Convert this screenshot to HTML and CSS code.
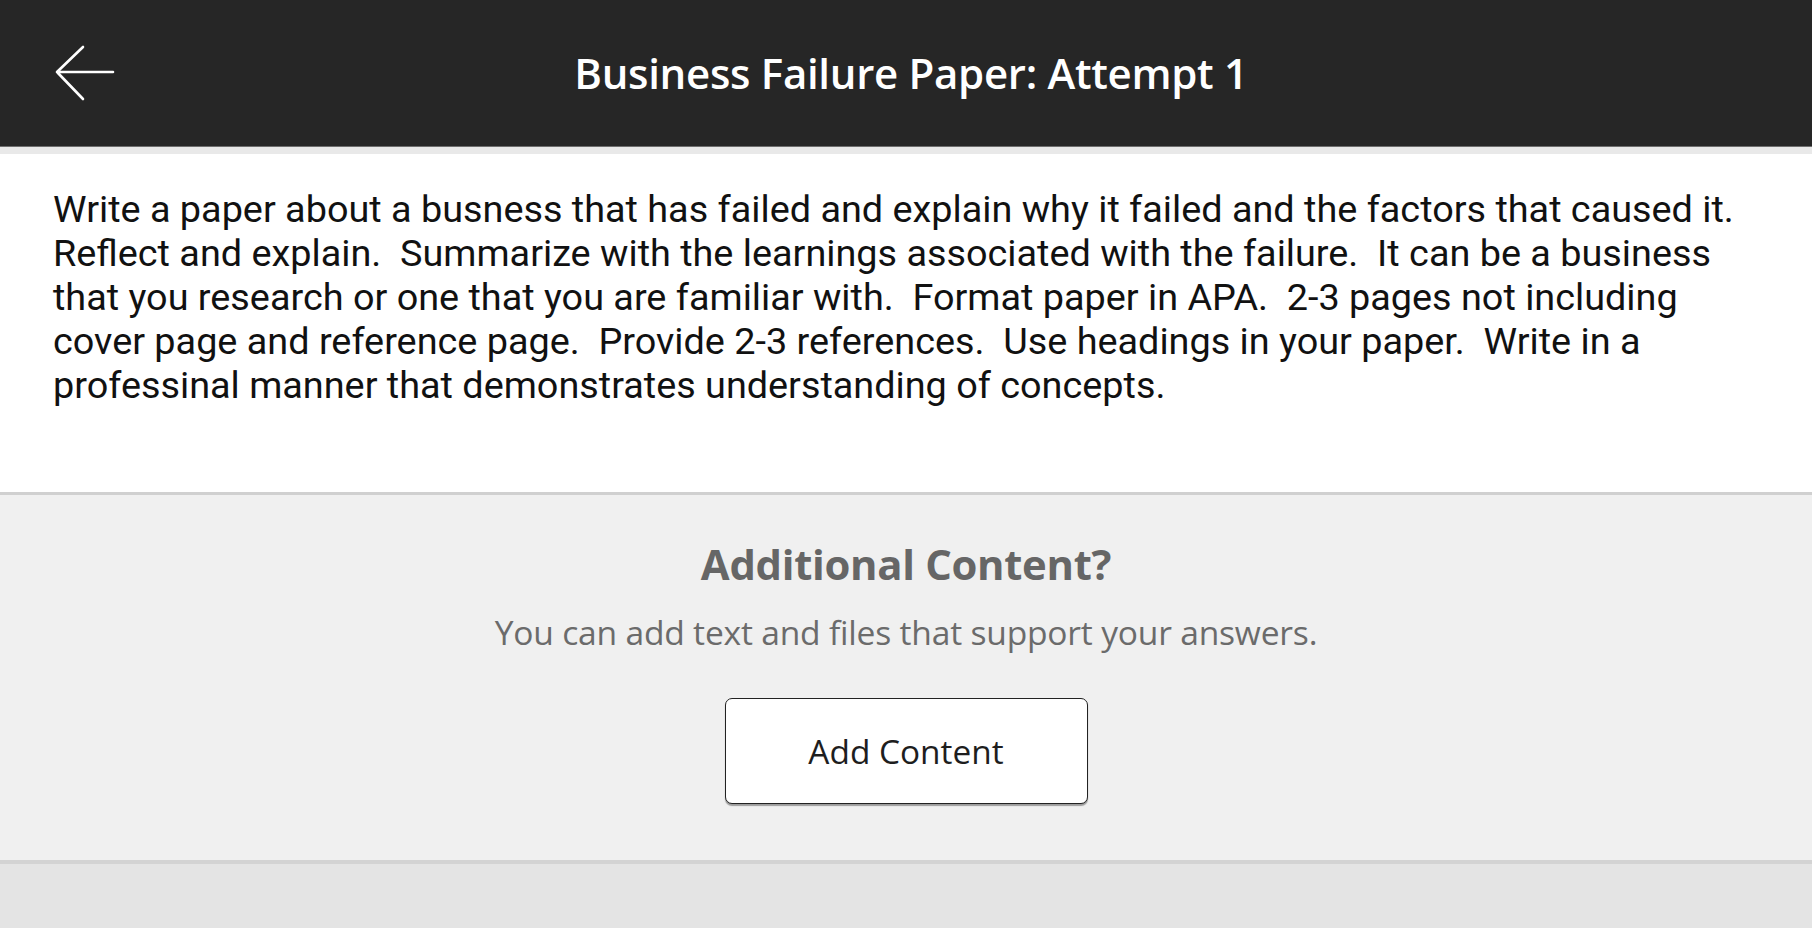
FILE: index.html
```html
<!DOCTYPE html>
<html lang="en">
<head>
<meta charset="utf-8">
<title>Business Failure Paper: Attempt 1</title>
<link rel="stylesheet" href="styles.css">
</head>
<body>
<header class="topbar">
  <div class="topbar-left">
    <svg class="back-icon" width="60" height="58" viewBox="0 0 60 58" aria-label="Back">
      <path d="M2 28 H58 M28 3 L2 28 L28 55" fill="none" stroke="#fff" stroke-width="2.6" stroke-linecap="round" stroke-linejoin="round"/>
    </svg>
  </div>
  <h1 class="title">Business Failure Paper: Attempt 1</h1>
  <div class="topbar-right"></div>
</header>
<div class="strip"></div>
<main>
  <section class="question">
    <p class="question-text">Write a paper about a busness that has failed and explain why it failed and the factors that caused it.  Reflect and explain.&nbsp; Summarize with the learnings associated with the failure.&nbsp; It can be a business that you research or one that you are familiar with.&nbsp; Format paper in APA.&nbsp; 2-3 pages not including cover page and reference page.&nbsp; Provide 2-3 references.&nbsp; Use headings in your paper.&nbsp; Write in a professinal manner that demonstrates understanding of concepts.</p>
  </section>
  <section class="additional">
    <h2 class="additional-title">Additional Content?</h2>
    <p class="additional-sub">You can add text and files that support your answers.</p>
    <button class="add-btn" type="button">Add Content</button>
  </section>
  <div class="footer-area"></div>
</main>
</body>
</html>
```
FILE: styles.css
```css
html, body {
  margin: 0;
  padding: 0;
}
body {
  background: #e4e4e4;
  font-family: "Open Sans", "Liberation Sans", sans-serif;
  width: 1812px;
  height: 928px;
  overflow: hidden;
}
.topbar {
  background: #262626;
  height: 146px;
  border-bottom: 1px solid #6e6e6e;
  display: grid;
  grid-template-columns: 1fr auto 1fr;
  align-items: center;
}
.topbar-left {
  padding-left: 55px;
  display: flex;
  align-items: center;
}
.back-icon {
  display: block;
}
.title {
  margin: 0 0 0 10px;
  color: #ffffff;
  font-family: "Open Sans", sans-serif;
  font-weight: 600;
  font-size: 42px;
  line-height: 56px;
  letter-spacing: -0.3px;
  white-space: nowrap;
}
.strip {
  height: 7px;
  background: #e9e9e9;
}
.question {
  background: #ffffff;
  padding: 33px 55px 85px 53px;
}
.question-text {
  margin: 0;
  font-family: Roboto, "Liberation Sans", sans-serif;
  font-size: 37.8px;
  line-height: 44px;
  color: #111111;
  white-space: pre-wrap;
}
.additional {
  background: #f0f0f0;
  border-top: 3px solid #d0d0d0;
  border-bottom: 4px solid #d3d3d3;
  display: flex;
  flex-direction: column;
  align-items: center;
  padding: 44px 0 56px 0;
}
.additional-title {
  margin: 0;
  font-family: "Open Sans", sans-serif;
  font-weight: 700;
  font-size: 41.8px;
  line-height: 50px;
  color: #666666;
  letter-spacing: -0.3px;
}
.additional-sub {
  margin: 20px 0 0 0;
  font-family: "Open Sans", sans-serif;
  font-size: 33.6px;
  line-height: 46px;
  color: #6b6b6b;
  letter-spacing: -0.2px;
}
.add-btn {
  margin-top: 43px;
  width: 363px;
  height: 106px;
  background: #ffffff;
  border: 1.5px solid #222222;
  border-radius: 7px;
  box-shadow: 0 2px 1px rgba(0, 0, 0, 0.35);
  font-family: "Open Sans", sans-serif;
  font-size: 33.4px;
  color: #1e1e1e;
  cursor: pointer;
  padding: 0;
}
.footer-area {
  background: #e4e4e4;
  height: 70px;
}
```
